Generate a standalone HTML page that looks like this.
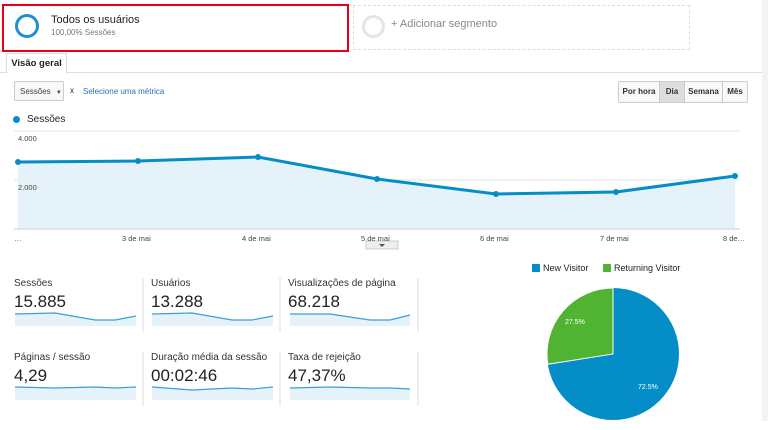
<!DOCTYPE html><html><head><meta charset="utf-8"><style>
body{margin:0;width:768px;height:421px;background:#fff;font-family:"Liberation Sans",sans-serif;position:relative;overflow:hidden;color:#222}
.a{position:absolute}
.lbl{font-size:10px;color:#333}
.num{font-size:17px;color:#222}
</style></head><body>
<div class="a" style="left:762px;top:0;width:6px;height:421px;background:#f3f3f3"></div>
<div class="a" style="left:2px;top:4px;width:343px;height:44px;border:2px solid #e8001c"></div>
<div class="a" style="left:15px;top:14px;width:18px;height:18px;border:3px solid #1e8fcf;border-radius:50%"></div>
<div class="a" style="left:51px;top:14px;font-size:11px;color:#222">Todos os usuários</div>
<div class="a" style="left:51px;top:28px;font-size:8px;color:#777">100,00% Sessões</div>
<div class="a" style="left:353px;top:5px;width:335px;height:43px;border:1px dashed #ddd"></div>
<div class="a" style="left:362px;top:15px;width:17px;height:17px;border:3px solid #e5e5e5;border-radius:50%"></div>
<div class="a" style="left:391px;top:18px;font-size:11px;color:#888">+ Adicionar segmento</div>
<div class="a" style="left:0;top:72px;width:762px;border-top:1px solid #ddd"></div>
<div class="a" style="left:6px;top:53px;width:59px;height:19px;border:1px solid #ddd;border-bottom:1px solid #fff;background:#fff;font-size:9.5px;font-weight:bold;text-align:center;line-height:19px">Visão geral</div>
<div class="a" style="left:14px;top:81px;width:50px;height:20px;border:1px solid #ccc;border-radius:2px;background:#f8f8f8;font-size:8px;color:#444;line-height:20px;padding-left:5px;box-sizing:border-box">Sessões <span style="font-size:6px;margin-left:3px">▼</span></div>
<div class="a" style="left:70px;top:86px;font-size:8px">x</div>
<div class="a" style="left:83px;top:87px;font-size:8px;color:#2a6fb5">Selecione uma métrica</div>
<div class="a" style="left:618px;top:81px;height:20px;border:1px solid #ccc;border-radius:2px;display:flex;font-size:8px;font-weight:bold;color:#333;line-height:20px;background:#f8f8f8">
<div style="width:40px;text-align:center;border-right:1px solid #ccc">Por hora</div>
<div style="width:24px;text-align:center;border-right:1px solid #ccc;background:#ddd">Dia</div>
<div style="width:37px;text-align:center;border-right:1px solid #ccc">Semana</div>
<div style="width:24px;text-align:center">Mês</div></div>
<div class="a" style="left:13px;top:116px;width:7px;height:7px;border-radius:50%;background:#058dc7"></div>
<div class="a" style="left:27px;top:114px;font-size:10px">Sessões</div>
<svg class="a" style="left:0;top:0" width="768" height="260">
<line x1="14" y1="131" x2="740" y2="131" stroke="#e5e5e5"/>
<line x1="14" y1="180" x2="740" y2="180" stroke="#e5e5e5"/>
<path d="M18 162 L138 161 L258 157 L377 179 L496 194 L616 192 L735 176 L735 229 L18 229Z" fill="#e6f2f9"/>
<line x1="14" y1="229" x2="740" y2="229" stroke="#ccc"/>
<polyline points="18,162 138,161 258,157 377,179 496,194 616,192 735,176" fill="none" stroke="#058dc7" stroke-width="3"/>
<g fill="#058dc7"><circle cx="18" cy="162" r="3"/><circle cx="138" cy="161" r="3"/><circle cx="258" cy="157" r="3"/><circle cx="377" cy="179" r="3"/><circle cx="496" cy="194" r="3"/><circle cx="616" cy="192" r="3"/><circle cx="735" cy="176" r="3"/></g>
<rect x="366" y="241" width="32" height="8" fill="#eee" stroke="#ccc"/><path d="M379 244 L385 244 L382 247Z" fill="#555"/>
</svg>
<div class="a" style="left:18px;top:134px;font-size:7.5px;color:#444">4.000</div>
<div class="a" style="left:18px;top:183px;font-size:7.5px;color:#444">2.000</div>
<div class="a" style="top:234px;font-size:7.5px;color:#444;left:14px">…</div>
<div class="a" style="top:234px;font-size:7.5px;color:#444;left:122px">3 de mai</div>
<div class="a" style="top:234px;font-size:7.5px;color:#444;left:242px">4 de mai</div>
<div class="a" style="top:234px;font-size:7.5px;color:#444;left:361px">5 de mai</div>
<div class="a" style="top:234px;font-size:7.5px;color:#444;left:480px">6 de mai</div>
<div class="a" style="top:234px;font-size:7.5px;color:#444;left:600px">7 de mai</div>
<div class="a" style="top:234px;font-size:7.5px;color:#444;left:723px">8 de…</div>

<div class="a lbl" style="left:14px;top:278px">Sessões</div><div class="a num" style="left:14px;top:292px">15.885</div>
<div class="a lbl" style="left:151px;top:278px">Usuários</div><div class="a num" style="left:151px;top:292px">13.288</div>
<div class="a lbl" style="left:288px;top:278px">Visualizações de página</div><div class="a num" style="left:288px;top:292px">68.218</div>
<div class="a lbl" style="left:14px;top:352px">Páginas / sessão</div><div class="a num" style="left:14px;top:366px">4,29</div>
<div class="a lbl" style="left:151px;top:352px">Duração média da sessão</div><div class="a num" style="left:151px;top:366px">00:02:46</div>
<div class="a lbl" style="left:288px;top:352px">Taxa de rejeição</div><div class="a num" style="left:288px;top:366px">47,37%</div>
<svg class="a" style="left:0;top:0" width="430" height="421">
<g stroke="#ddd"><line x1="143" y1="278" x2="143" y2="332"/><line x1="280" y1="278" x2="280" y2="332"/><line x1="418" y1="278" x2="418" y2="332"/>
<line x1="143" y1="352" x2="143" y2="406"/><line x1="280" y1="352" x2="280" y2="406"/><line x1="418" y1="352" x2="418" y2="406"/></g>
<g fill="#e6f2f9">
<path d="M15 314 L55 313 L95 320 L115 320 L136 316 L136 326 L15 326Z"/>
<path d="M152 314 L192 313 L232 320 L252 320 L273 316 L273 326 L152 326Z"/>
<path d="M290 314 L330 314 L370 320 L390 320 L410 315 L410 326 L290 326Z"/>
<path d="M15 387 L55 388 L95 387 L115 388 L136 387 L136 400 L15 400Z"/>
<path d="M152 387 L192 390 L232 388 L252 389 L273 387 L273 400 L152 400Z"/>
<path d="M290 388 L330 387 L370 388 L390 388 L410 389 L410 400 L290 400Z"/>
</g>
<g fill="none" stroke="#3a9fd8" stroke-width="1.2">
<path d="M15 314 L55 313 L95 320 L115 320 L136 316"/>
<path d="M152 314 L192 313 L232 320 L252 320 L273 316"/>
<path d="M290 314 L330 314 L370 320 L390 320 L410 315"/>
<path d="M15 387 L55 388 L95 387 L115 388 L136 387"/>
<path d="M152 387 L192 390 L232 388 L252 389 L273 387"/>
<path d="M290 388 L330 387 L370 388 L390 388 L410 389"/>
</g></svg>

<div class="a" style="left:532px;top:264px;width:8px;height:8px;background:#058dc7"></div>
<div class="a" style="left:543px;top:263px;font-size:9px">New Visitor</div>
<div class="a" style="left:603px;top:264px;width:8px;height:8px;background:#50b432"></div>
<div class="a" style="left:614px;top:263px;font-size:9px">Returning Visitor</div>
<svg class="a" style="left:540px;top:280px" width="150" height="150">
<circle cx="73" cy="74" r="66" fill="#058dc7"/>
<path d="M73 74 L73 8 A66 66 0 0 0 7.8 84.3 Z" fill="#50b432" stroke="#fff" stroke-width="1"/>
<line x1="73" y1="74" x2="73" y2="8" stroke="#fff"/>
<text x="25" y="44" font-size="7" fill="#fff" font-family="Liberation Sans">27.5%</text>
<text x="98" y="109" font-size="7" fill="#fff" font-family="Liberation Sans">72.5%</text>
</svg>
</body></html>
